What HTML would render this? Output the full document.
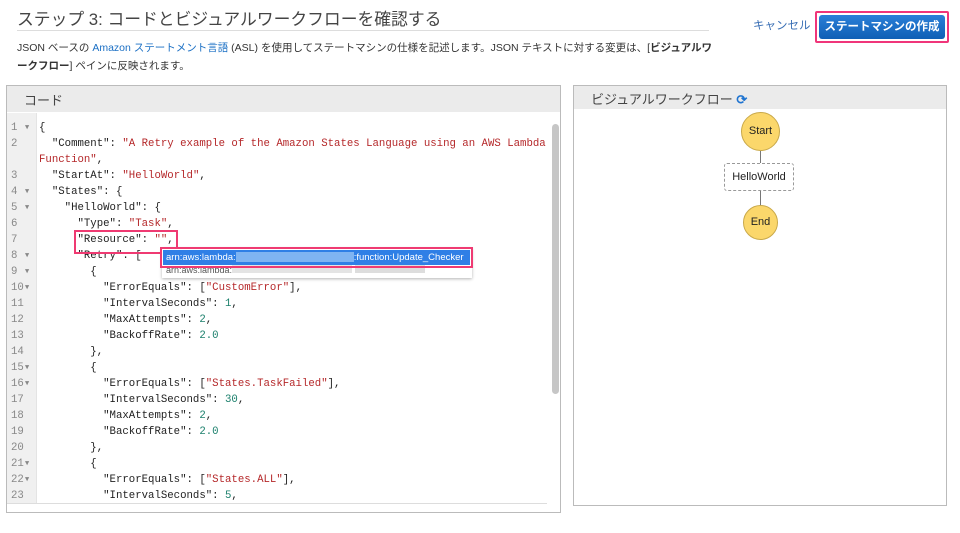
<!DOCTYPE html>
<html><head><meta charset="utf-8"><style>
*{margin:0;padding:0;box-sizing:border-box}
body{width:960px;height:533px;background:#fff;font-family:"Liberation Sans","Noto Sans CJK JP",sans-serif;position:relative;overflow:hidden;color:#333}
.abs{position:absolute}
h1{position:absolute;left:17px;top:6px;font-size:16.8px;font-weight:normal;color:#444;white-space:nowrap}
.rule{left:17px;top:30px;width:692px;height:1px;background:#ddd}
.desc{left:17px;top:39px;font-size:10.5px;line-height:18px;color:#333;width:700px}
.desc a{color:#1a6fc4}
.cancel{left:753px;top:17px;font-size:11.5px;color:#3a6fb5}
.btnwrap{left:815px;top:11px;width:134px;height:32px;border:2px solid #f0357a;border-radius:2px}
.btn{position:absolute;left:2px;top:2px;right:2px;bottom:2px;background:linear-gradient(#2a7fd8,#0f5fb5);border-radius:3px;color:#fff;font-weight:bold;font-size:11.5px;text-align:center;line-height:24px}
.panel{border:1px solid #bbb;overflow:hidden}
.ph{background:#ebebeb;height:26px;font-size:13px;color:#444;padding:4px 0 0 17px}
.code{left:6px;top:85px;width:555px;height:428px}
.gutter{left:0;top:27px;width:30px;height:390px;background:#f0f0f0;border-right:1px solid #e4e4e4}
.mono{font-family:"Liberation Mono",monospace;font-size:10.7px;line-height:16px;white-space:pre}
.txt{left:32px;top:34px;color:#222}
.s{color:#b5282a}.n{color:#1a7f6b}
.vs{left:545px;top:38px;width:7px;height:270px;background:#c6c6c6;border-radius:4px}
.hs{left:0;top:417px;width:540px;height:1px;background:#ddd}
.flow{left:573px;top:85px;width:374px;height:421px}
.circ{position:absolute;border-radius:50%;background:#fbd76b;border:1px solid #c9a94a;font-size:11px;text-align:center;color:#222}
</style></head><body>
<h1>ステップ 3: コードとビジュアルワークフローを確認する</h1>
<div class="abs rule"></div>
<div class="abs desc">JSON ベースの <a>Amazon ステートメント言語</a> (ASL) を使用してステートマシンの仕様を記述します。JSON テキストに対する変更は、[<b>ビジュアルワークフロー</b>] ペインに反映されます。</div>
<div class="abs cancel">キャンセル</div>
<div class="abs btnwrap"><div class="btn">ステートマシンの作成</div></div>

<div class="abs panel code">
<div class="ph">コード</div>
<div class="abs gutter"></div>
<div class="abs mono" style="left:4px;top:34px;color:#888">1 ▾
2

3
4 ▾
5 ▾
6
7
8 ▾
9 ▾
10▾
11
12
13
14
15▾
16▾
17
18
19
20
21▾
22▾
23</div>
<div class="abs mono txt">{
  "Comment": <span class="s">"A Retry example of the Amazon States Language using an AWS Lambda</span>
<span class="s">Function"</span>,
  "StartAt": <span class="s">"HelloWorld"</span>,
  "States": {
    "HelloWorld": {
      "Type": <span class="s">"Task"</span>,
      "Resource": <span class="s">""</span>,
      "Retry": [
        {
          "ErrorEquals": [<span class="s">"CustomError"</span>],
          "IntervalSeconds": <span class="n">1</span>,
          "MaxAttempts": <span class="n">2</span>,
          "BackoffRate": <span class="n">2.0</span>
        },
        {
          "ErrorEquals": [<span class="s">"States.TaskFailed"</span>],
          "IntervalSeconds": <span class="n">30</span>,
          "MaxAttempts": <span class="n">2</span>,
          "BackoffRate": <span class="n">2.0</span>
        },
        {
          "ErrorEquals": [<span class="s">"States.ALL"</span>],
          "IntervalSeconds": <span class="n">5</span>,</div>
<div class="abs" style="left:0;top:418px;width:555px;height:12px;background:#fff"></div>
<div class="abs vs"></div>
<div class="abs hs"></div>
<div class="abs" style="left:67px;top:144px;width:104px;height:24px;border:2px solid #ef3a72"></div>
<div class="abs" style="left:155px;top:162px;width:310px;height:30px;background:#fff;box-shadow:0 1px 3px rgba(0,0,0,.3)"></div>
<div class="abs" style="left:159px;top:179px;font-size:9px;color:#555;white-space:nowrap">arn:aws:lambda:<span style="display:inline-block;width:120px;height:8px;background:#e4e4e4"></span><span style="display:inline-block;width:70px;height:8px;background:#ddd;margin-left:3px"></span></div>
<div class="abs" style="left:153px;top:161px;width:313px;height:21px;border:2px solid #ef3a72"></div>
<div class="abs" style="left:156px;top:164px;width:307px;height:15px;background:#2f7fe6;color:#fff;font-size:9.5px;line-height:15px;padding-left:3px;white-space:nowrap">arn:aws:lambda:<span style="display:inline-block;width:118px;height:10px;background:#7fb4f2;vertical-align:middle"></span>:function:Update_Checker</div>
</div>

<div class="abs panel flow">
<div class="ph" style="height:23px;padding-top:3px">ビジュアルワークフロー <span style="color:#1f74d0;font-weight:bold">⟳</span></div>
<div class="circ" style="left:167px;top:26px;width:39px;height:39px;line-height:37px">Start</div>
<div class="abs" style="left:186px;top:65px;width:1px;height:12px;background:#777"></div>
<div class="abs" style="left:150px;top:77px;width:70px;height:28px;border:1px dashed #999;border-radius:3px;font-size:11px;text-align:center;line-height:26px;color:#222">HelloWorld</div>
<div class="abs" style="left:186px;top:105px;width:1px;height:14px;background:#777"></div>
<div class="circ" style="left:169px;top:119px;width:35px;height:35px;line-height:33px">End</div>
</div>
</body></html>
